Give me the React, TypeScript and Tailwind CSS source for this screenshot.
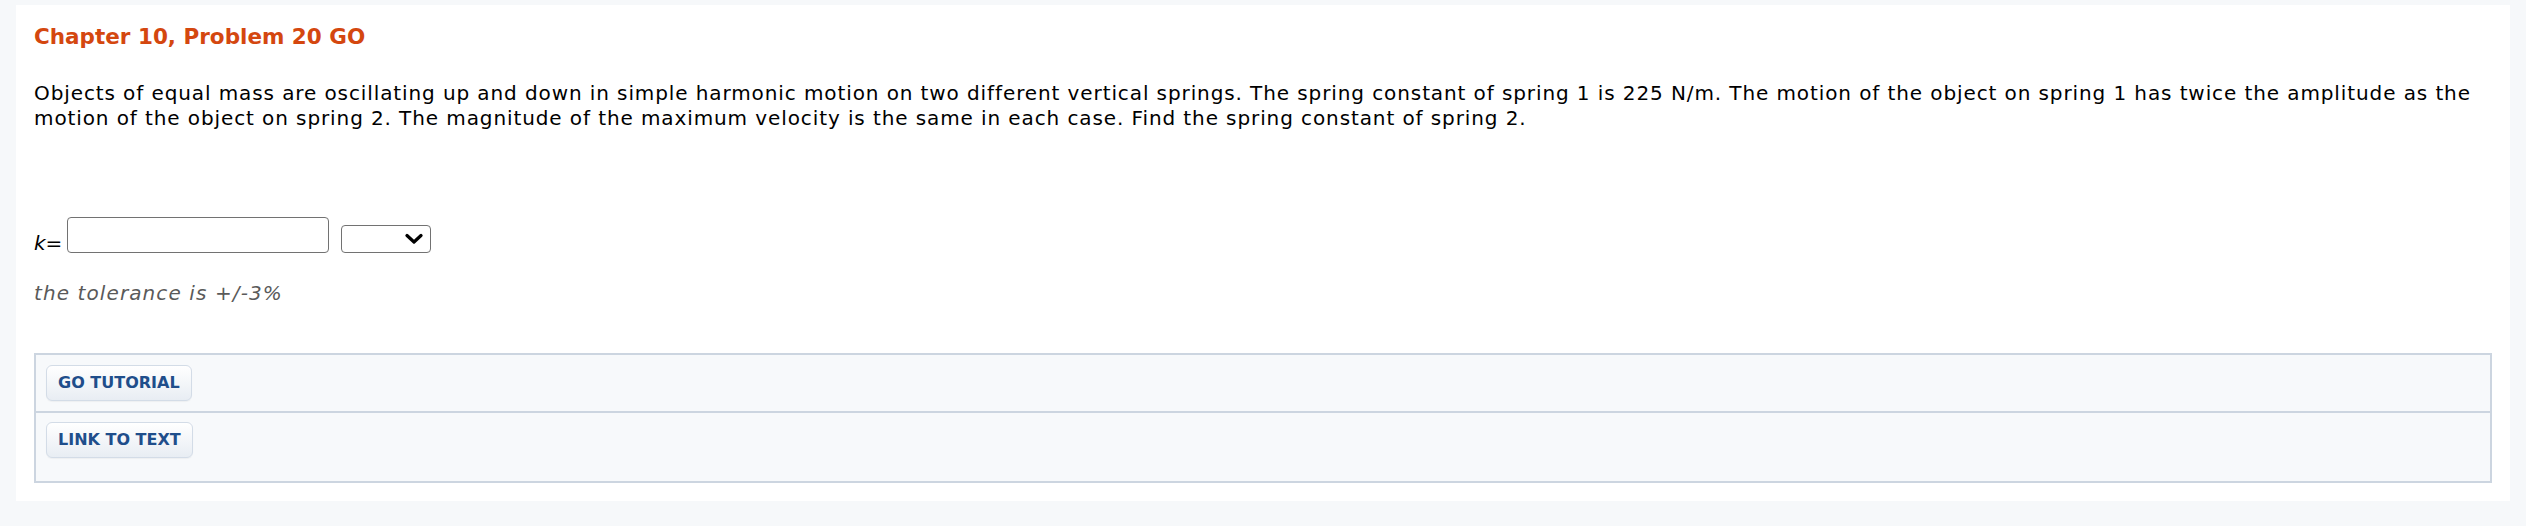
import React from "react";

const font = { fontFamily: '"DejaVu Sans", Verdana, sans-serif' };

function ActionButton({ label }: { label: string }) {
  return (
    <button
      type="button"
      className="h-[36px] rounded-[6px] border-[1.5px] border-[#d3dce7] bg-gradient-to-b from-[#ffffff] to-[#e8edf3] pl-[11px] pr-[11px] text-[16px] font-bold leading-none text-[#1f4e8b] shadow-[0_1px_1px_rgba(0,0,0,0.04)]"
    >
      {label}
    </button>
  );
}

export default function App() {
  return (
    <div className="min-h-[526px] w-full bg-[#f6f8fa] pt-[5px]" style={font}>
      <div className="mx-[16px] bg-white px-[18px] pt-[18px] pb-[18px]">
        {/* Heading */}
        <h1 className="text-[21.5px] font-bold leading-[28px] text-[#d4470f]">
          Chapter 10, Problem 20 GO
        </h1>

        {/* Question */}
        <p className="mt-[30px] text-[20px] leading-[25px] tracking-[0.9px] text-black">
          Objects of equal mass are oscillating up and down in simple harmonic motion on two different vertical springs. The spring constant of spring 1 is 225 N/m. The motion of the object on spring 1 has twice the amplitude as the motion of the object on spring 2. The magnitude of the maximum velocity is the same in each case. Find the spring constant of spring 2.
        </p>

        {/* Answer row */}
        <div className="mt-[86px] flex items-start">
          <span className="mt-[14px] w-[33px] text-[20px] leading-[25px] text-black">
            <i>k</i>=
          </span>
          <input
            type="text"
            className="h-[36px] w-[262px] rounded-[4px] border-[1.5px] border-[#727272] bg-white"
          />
          <div className="ml-[12px] mt-[8px] flex h-[28px] w-[90px] items-center justify-end rounded-[4px] border-[1.5px] border-[#727272] bg-white pr-[7px]">
            <svg width="18" height="12" viewBox="0 0 18 12" fill="none">
              <path d="M2 2.5 L9 9 L16 2.5" stroke="#000" strokeWidth="3.2" strokeLinecap="round" strokeLinejoin="round" />
            </svg>
          </div>
        </div>

        <p className="mt-[25px] text-[20px] italic leading-[25px] tracking-[1.1px] text-[#5a5a5a]">
          the tolerance is +/-3%
        </p>

        {/* Help links */}
        <div className="mt-[47px] border-2 border-[#ccd5e0] bg-[#f7f9fb]">
          <div className="border-b-2 border-[#ccd5e0] px-[10px] pt-[10px] pb-[10px]">
            <ActionButton label="GO TUTORIAL" />
          </div>
          <div className="px-[10px] pt-[9px] pb-[23px]">
            <ActionButton label="LINK TO TEXT" />
          </div>
        </div>
      </div>
    </div>
  );
}
